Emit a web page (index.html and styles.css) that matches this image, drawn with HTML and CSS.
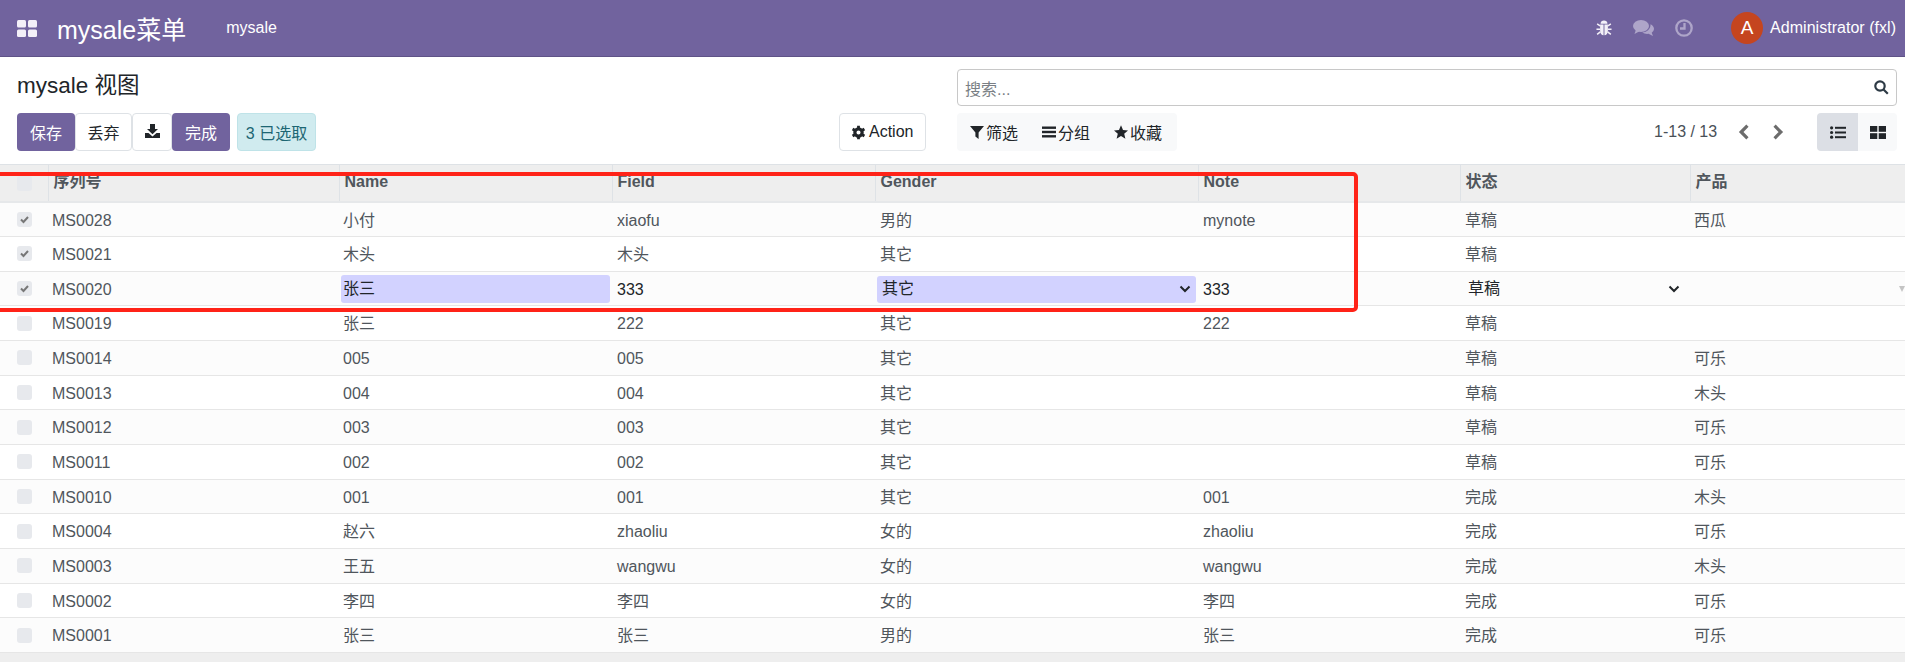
FILE: index.html
```html
<!DOCTYPE html>
<html>
<head>
    <title>mysale 视图</title>
    <link rel="stylesheet" href="styles.css">
</head>
<body>
    <!-- top bar -->
    <header class="navbar">
        <svg class="apps-icon" viewBox="0 0 20 17"><rect width="9" height="7.5" rx="1.5"/><rect x="11" width="9" height="7.5" rx="1.5"/><rect y="9.5" width="9" height="7.5" rx="1.5"/><rect x="11" y="9.5" width="9" height="7.5" rx="1.5"/></svg>
        <span class="brand">mysale菜单</span>
        <span class="nav-link">mysale</span>
        <div class="systray">
            <svg class="tray-bug" viewBox="0 0 14 14"><path d="M4 3.2C4 1.4 5.3.4 7 .4s3 1 3 2.8z"/><path d="M3.6 4h3v9.4C4.8 13.2 3.6 11.6 3.6 9.6zM7.4 4h3v5.6c0 2-1.2 3.6-3 3.8z"/><path class="legs" d="M3.6 5.2 1 3.4M3.6 8H.4M3.8 10.4 1 12.6M10.4 5.2 13 3.4M10.4 8h3.2M10.2 10.4l2.8 2.2"/></svg>
            <svg class="tray-chat" viewBox="0 0 21 16"><ellipse cx="8" cy="6" rx="8" ry="6"/><path d="M3 9.5 1.5 14 7 11z"/><path d="M17.5 4.2C19.6 5.2 21 6.9 21 8.8c0 1.500-.9 2.900-2.300 3.900L20 16l-4.500-2.200c-2 .3-4.700-.2-6.300-1.300 4.800-.2 8.600-3.700 8.300-8.300z"/></svg>
            <svg class="tray-clock" viewBox="0 0 18 18"><circle cx="9" cy="9" r="7.700"/><path d="M9.500 4v5.500H5"/></svg>
            <span class="avatar">A</span>
            <span class="user-name">Administrator (fxl)</span>
        </div>
    </header>

    <!-- control panel -->
    <section class="control-panel">
        <h1 class="view-title">mysale 视图</h1>
        <div class="search-box">
            <span class="search-hint">搜索...</span>
            <svg class="search-icon" viewBox="0 0 15 15"><circle cx="6" cy="6" r="4.700"/><path d="M9.500 9.500 13.800 13.800"/></svg>
        </div>
        <div class="left-tools">
            <button class="btn btn-primary">保存</button>
            <button class="btn btn-plain">丢弃</button>
            <button class="btn btn-plain btn-icon">
                <svg class="download-icon" viewBox="0 0 15 14"><path d="M5 0h5v5h3L7.500 10.200 2 5h3z"/><path d="M0 9h3.500l4 3.500 4-3.500H15v5H0z"/></svg>
            </button>
            <button class="btn btn-primary">完成</button>
            <span class="selected-badge">3 已选取</span>
            <button class="btn btn-plain btn-action">
                <svg class="cog-icon" viewBox="0 0 14 14"><path class="cog-teeth" d="M7 .6v12.800M1.460 3.800l11.080 6.400M12.540 3.800 1.460 10.200"/><circle class="cog-ring" cx="7" cy="7" r="3.400"/></svg>
                Action
            </button>
        </div>
        <div class="right-tools">
            <div class="search-options">
                <span class="option">
                    <svg class="opt-icon" viewBox="0 0 14 14"><path d="M0 1h14L8.600 7.500V14L5.400 11.500V7.500z"/></svg>筛选
                </span>
                <span class="option">
                    <svg class="opt-icon" viewBox="0 0 14 14"><rect y="1.500" width="14" height="2.400"/><rect y="5.800" width="14" height="2.400"/><rect y="10.100" width="14" height="2.400"/></svg>分组
                </span>
                <span class="option">
                    <svg class="opt-icon" viewBox="0 0 14 14"><path d="M7 .3 9 5l5 .4-3.800 3.300 1.200 5L7 11l-4.400 2.700 1.200-5L0 5.400 5 5z"/></svg>收藏
                </span>
            </div>
            <div class="pager">
                <span class="pager-value">1-13 / 13</span>
                <svg class="pager-arrow" viewBox="0 0 10 14"><path d="M8 1.500 2.500 7 8 12.500"/></svg>
                <svg class="pager-arrow" viewBox="0 0 10 14"><path d="M2 1.500 7.500 7 2 12.500"/></svg>
            </div>
            <div class="view-switch">
                <span class="switch-btn active">
                    <svg class="switch-icon" viewBox="0 0 16 13"><circle cx="1.600" cy="1.800" r="1.600"/><circle cx="1.600" cy="6.500" r="1.600"/><circle cx="1.600" cy="11.200" r="1.600"/><rect x="5" y=".8" width="11" height="2"/><rect x="5" y="5.500" width="11" height="2"/><rect x="5" y="10.200" width="11" height="2"/></svg>
                </span>
                <span class="switch-btn">
                    <svg class="switch-icon" viewBox="0 0 16 13"><rect width="7.300" height="5.800"/><rect x="8.700" width="7.300" height="5.800"/><rect y="7.200" width="7.300" height="5.800"/><rect x="8.700" y="7.200" width="7.300" height="5.800"/></svg>
                </span>
            </div>
        </div>
    </section>

    <!-- list view -->
    <table class="list">
        <colgroup>
            <col class="col-check"><col class="col-seq"><col class="col-name"><col class="col-field"><col class="col-gender"><col class="col-note"><col class="col-state"><col class="col-product">
        </colgroup>
        <thead>
            <tr>
                <th class="cell-check"><span class="check"></span></th>
                <th>序列号</th><th>Name</th><th>Field</th><th>Gender</th><th>Note</th><th>状态</th><th>产品</th>
            </tr>
        </thead>
        <tbody>
            <tr>
                <td class="cell-check"><span class="check"><svg viewBox="0 0 15 15"><path d="M4 7.500 6.500 10 11 5"/></svg></span></td>
                <td>MS0028</td><td>小付</td><td>xiaofu</td><td>男的</td><td>mynote</td><td>草稿</td><td>西瓜</td>
            </tr>
            <tr>
                <td class="cell-check"><span class="check"><svg viewBox="0 0 15 15"><path d="M4 7.500 6.500 10 11 5"/></svg></span></td>
                <td>MS0021</td><td>木头</td><td>木头</td><td>其它</td><td></td><td>草稿</td><td></td>
            </tr>
            <tr class="editing">
                <td class="cell-check"><span class="check"><svg viewBox="0 0 15 15"><path d="M4 7.500 6.500 10 11 5"/></svg></span></td>
                <td>MS0020</td>
                <td class="cell-input"><div class="edit-box">张三</div></td>
                <td class="cell-dark">333</td>
                <td class="cell-input"><div class="edit-box select-box">其它<svg class="select-arrow" viewBox="0 0 12 8"><path d="M1.500 1.500 6 6l4.500-4.500"/></svg></div></td>
                <td class="cell-dark">333</td>
                <td class="cell-input"><div class="plain-select">草稿<svg class="select-arrow" viewBox="0 0 12 8"><path d="M1.500 1.500 6 6l4.500-4.500"/></svg></div></td>
                <td class="cell-input"><div class="many2one"><span class="m2o-caret"></span></div></td>
            </tr>
            <tr>
                <td class="cell-check"><span class="check"></span></td>
                <td>MS0019</td><td>张三</td><td>222</td><td>其它</td><td>222</td><td>草稿</td><td></td>
            </tr>
            <tr>
                <td class="cell-check"><span class="check"></span></td>
                <td>MS0014</td><td>005</td><td>005</td><td>其它</td><td></td><td>草稿</td><td>可乐</td>
            </tr>
            <tr>
                <td class="cell-check"><span class="check"></span></td>
                <td>MS0013</td><td>004</td><td>004</td><td>其它</td><td></td><td>草稿</td><td>木头</td>
            </tr>
            <tr>
                <td class="cell-check"><span class="check"></span></td>
                <td>MS0012</td><td>003</td><td>003</td><td>其它</td><td></td><td>草稿</td><td>可乐</td>
            </tr>
            <tr>
                <td class="cell-check"><span class="check"></span></td>
                <td>MS0011</td><td>002</td><td>002</td><td>其它</td><td></td><td>草稿</td><td>可乐</td>
            </tr>
            <tr>
                <td class="cell-check"><span class="check"></span></td>
                <td>MS0010</td><td>001</td><td>001</td><td>其它</td><td>001</td><td>完成</td><td>木头</td>
            </tr>
            <tr>
                <td class="cell-check"><span class="check"></span></td>
                <td>MS0004</td><td>赵六</td><td>zhaoliu</td><td>女的</td><td>zhaoliu</td><td>完成</td><td>可乐</td>
            </tr>
            <tr>
                <td class="cell-check"><span class="check"></span></td>
                <td>MS0003</td><td>王五</td><td>wangwu</td><td>女的</td><td>wangwu</td><td>完成</td><td>木头</td>
            </tr>
            <tr>
                <td class="cell-check"><span class="check"></span></td>
                <td>MS0002</td><td>李四</td><td>李四</td><td>女的</td><td>李四</td><td>完成</td><td>可乐</td>
            </tr>
            <tr>
                <td class="cell-check"><span class="check"></span></td>
                <td>MS0001</td><td>张三</td><td>张三</td><td>男的</td><td>张三</td><td>完成</td><td>可乐</td>
            </tr>
        </tbody>
    </table>

    <!-- hand drawn red box over the first rows -->
    <div class="red-mark"></div>
</body>
</html>
```

FILE: styles.css
```css
html, body {
    margin: 0;
    padding: 0;
    height: 100%;
    overflow: hidden;
}

body {
    position: relative;
    background: #eeeeee;
    color: #50565c;
    font-family: "Liberation Sans", "Noto Sans CJK SC", sans-serif;
    font-size: 16px;
}

/* top bar */
.navbar {
    display: flex;
    align-items: center;
    box-sizing: border-box;
    height: 57px;
    padding: 0 9px 0 17px;
    background: #71639e;
    border-bottom: 1px solid #5f5387;
    color: #ffffff;
}

.apps-icon {
    width: 20px;
    height: 17px;
    margin-right: 20px;
    fill: #f3f0f8;
}

.brand {
    font-size: 25px;
    margin-right: 40px;
}

.nav-link {
    font-size: 16px;
}

.systray {
    display: flex;
    align-items: center;
    margin-left: auto;
}

.tray-bug {
    width: 16px;
    height: 16px;
    margin-right: 21px;
    fill: #f3f0f8;
}

.tray-bug .legs {
    fill: none;
    stroke: #f3f0f8;
    stroke-width: 1.3;
}

.tray-chat {
    width: 21px;
    height: 16px;
    margin-right: 21px;
    fill: #aea5c9;
}

.tray-clock {
    width: 18px;
    height: 18px;
    margin-right: 38px;
    fill: none;
    stroke: #aea5c9;
    stroke-width: 2.300;
}

.avatar {
    display: flex;
    align-items: center;
    justify-content: center;
    width: 32px;
    height: 32px;
    margin-right: 7px;
    border-radius: 50%;
    background: #c5451f;
    font-size: 19px;
}

.user-name {
    letter-spacing: .03px;
}

/* control panel */
.control-panel {
    display: grid;
    grid-template-columns: 940px 940px;
    grid-template-rows: 37px 38px;
    row-gap: 7px;
    box-sizing: border-box;
    height: 108px;
    padding: 12px 8px 14px 17px;
    background: #ffffff;
    border-bottom: 1px solid #dee2e6;
}

.view-title {
    margin: 0;
    font-size: 22.500px;
    font-weight: normal;
    line-height: 34px;
    color: #212529;
}

.search-box {
    display: flex;
    align-items: center;
    justify-content: space-between;
    padding: 0 7px 0 7px;
    border: 1px solid #c8c8c8;
    border-radius: 4px;
}

.search-hint {
    color: #7a7f85;
}

.search-icon {
    width: 15px;
    height: 15px;
    fill: none;
    stroke: #2d3a45;
    stroke-width: 2.200;
}

.left-tools,
.right-tools {
    display: flex;
    align-items: stretch;
}

.btn {
    box-sizing: border-box;
    height: 38px;
    padding: 0;
    border: 1px solid transparent;
    border-radius: 4px;
    font-family: inherit;
    font-size: 16px;
    white-space: nowrap;
}

.btn-primary {
    width: 58px;
    background: #71639e;
    color: #ffffff;
}

.btn-plain {
    width: 57px;
    background: #ffffff;
    border-color: #dee2e6;
    color: #212529;
}

.btn-plain.btn-icon {
    width: 40px;
}

.download-icon {
    display: block;
    width: 15px;
    height: 14px;
    margin: -3px auto 0;
    fill: #212529;
}

.selected-badge {
    display: flex;
    align-items: center;
    justify-content: center;
    box-sizing: border-box;
    width: 79px;
    margin-left: 7px;
    white-space: nowrap;
    background: #d0ebef;
    border: 1px solid #bfe3e8;
    border-radius: 4px;
    color: #1d6673;
}

.btn-plain.btn-action {
    display: flex;
    align-items: center;
    gap: 3px;
    width: 87px;
    margin-left: 523px;
    padding: 0 11px;
}

.cog-icon {
    flex: none;
    width: 15px;
    height: 15px;
}

.cog-teeth {
    fill: none;
    stroke: #212529;
    stroke-width: 2.600;
}

.cog-ring {
    fill: #ffffff;
    stroke: #212529;
    stroke-width: 3;
}

.search-options {
    display: flex;
    align-items: center;
    box-sizing: border-box;
    width: 220px;
    padding-left: 13px;
    gap: 24px;
    background: #f8f9fa;
    border-radius: 4px;
    color: #212529;
}

.option {
    display: flex;
    align-items: center;
    gap: 2px;
}

.opt-icon {
    width: 14px;
    height: 14px;
    fill: #212529;
}

.pager {
    display: flex;
    align-items: center;
    margin-left: 477px;
}

.pager-value {
    margin-right: 21px;
    color: #495057;
    white-space: nowrap;
}

.pager-arrow {
    width: 12px;
    height: 16px;
    margin-right: 22px;
    fill: none;
    stroke: #6c6c6c;
    stroke-width: 2.800;
}

.view-switch {
    display: flex;
    margin-left: auto;
    border-radius: 4px;
    overflow: hidden;
}

.switch-btn {
    display: flex;
    align-items: center;
    justify-content: center;
    width: 39px;
    background: #f8f9fa;
}

.switch-btn.active {
    width: 41px;
    background: #dcdfe5;
}

.switch-icon {
    width: 16px;
    height: 13px;
    fill: #212529;
}

/* list */
.list {
    width: 100%;
    table-layout: fixed;
    border-collapse: collapse;
    background: #ffffff;
}

.col-check { width: 48px; }
.col-seq { width: 291px; }
.col-name { width: 273px; }
.col-field { width: 263px; }
.col-gender { width: 323px; }
.col-note { width: 262px; }
.col-state { width: 230px; }
.col-product { width: 215px; }

.list th {
    height: 37px;
    padding: 0 0 2px 5px;
    background: #eeeeee;
    border-left: 1px solid #dee2e6;
    border-bottom: 2px solid #e6e8ea;
    font-weight: bold;
    text-align: left;
    line-height: 20px;
    box-sizing: border-box;
}

.list td {
    height: 34.67px;
    padding: 2px 0 0 5px;
    border-bottom: 1px solid #e6e6e6;
    line-height: 20px;
    box-sizing: border-box;
    white-space: nowrap;
}

.list td:nth-child(2),
.list td:nth-child(3),
.list td:nth-child(8) {
    padding-left: 4px;
}

.list tbody tr:nth-child(odd) {
    background: #fcfcfc;
}

.list th.cell-check {
    border-left: none;
}

.list th.cell-check,
.list td.cell-check {
    padding: 0 0 0 17px;
}

.check {
    display: block;
    width: 15px;
    height: 15px;
    background: #e7e9ed;
    border-radius: 3px;
}

.check svg {
    display: block;
    width: 15px;
    height: 15px;
    fill: none;
    stroke: #777777;
    stroke-width: 2;
}

.list td.cell-input {
    padding: 1px 2px 0;
}

.list td.cell-dark {
    color: #212529;
}

.edit-box {
    display: flex;
    align-items: center;
    height: 28px;
    padding-left: 2px;
    background: #d2d2ff;
    border-radius: 3px;
    color: #212529;
}

.select-box {
    height: 27px;
    padding-left: 5px;
    justify-content: space-between;
    padding-right: 5px;
}

.plain-select {
    display: flex;
    align-items: center;
    justify-content: space-between;
    padding: 0 8px 0 6px;
    color: #212529;
}

.select-arrow {
    width: 12px;
    height: 8px;
    fill: none;
    stroke: #212529;
    stroke-width: 2;
}

.many2one {
    display: flex;
    justify-content: flex-end;
}

.m2o-caret {
    width: 0;
    height: 0;
    margin-right: -2px;
    border-top: 6px solid #c4c4c4;
    border-left: 3px solid transparent;
    border-right: 3px solid transparent;
}

.red-mark {
    position: absolute;
    left: -12px;
    top: 172px;
    width: 1362px;
    height: 132px;
    border: 4px solid #ff2318;
    border-radius: 5px;
}
```
